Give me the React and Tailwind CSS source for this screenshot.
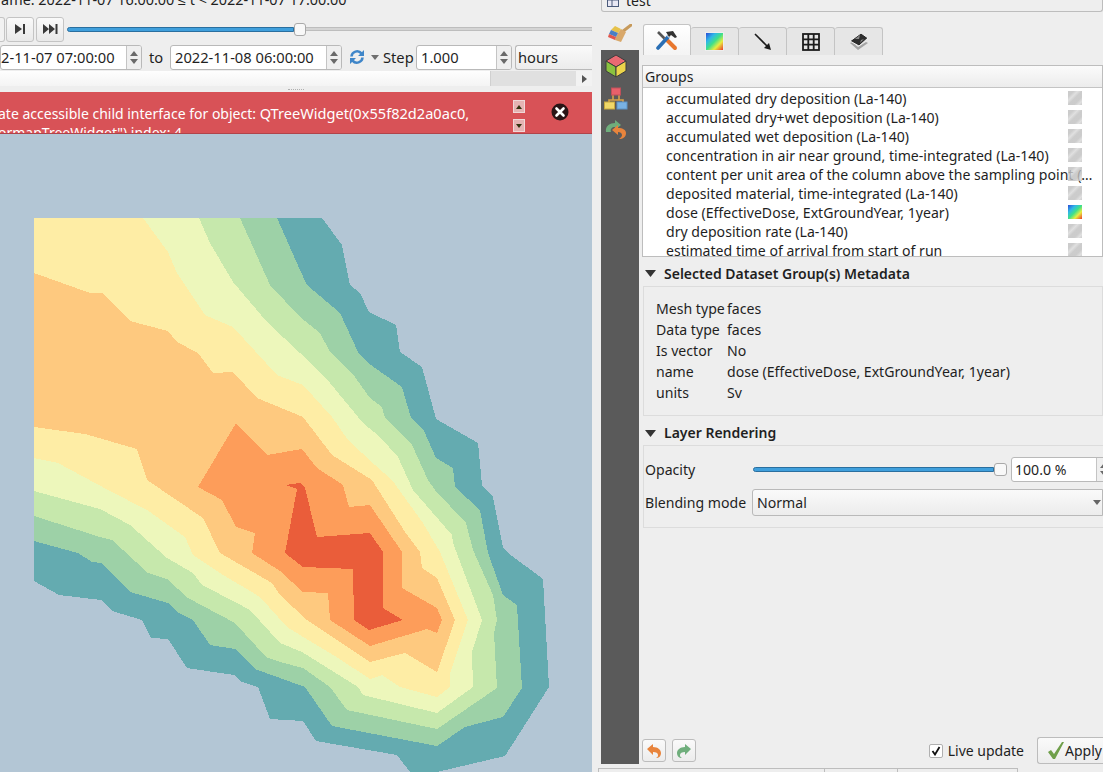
const FONT = "font-['Noto_Sans',sans-serif]";

const teal = "34,218 322,218 342,245 350,285 360,293 369,312 396,325 400,352 422,367 436,419 478,443 482,485 493,497 503,548 508,553 543,579 549,687 505,756 437,772 410,772 397,755 316,741 303,721 270,719 258,687 242,682 234,675 187,668 168,639 151,638 142,620 112,611 101,600 59,595 34,581";
const green = "34,218 277,218 300,270 307,285 340,313 358,352 368,363 402,387 411,418 424,431 436,458 453,468 455,487 480,510 488,553 503,595 517,605 522,688 503,717 465,727 437,746 332,726 305,687 280,678 255,669 235,649 210,645 193,620 177,612 168,603 130,592 102,563 92,562 78,553 34,541";
const lime = "34,218 240,218 270,285 300,317 320,333 330,352 352,373 370,398 382,407 385,418 412,445 428,480 435,490 466,523 473,550 493,595 497,620 494,633 497,688 437,729 347,710 330,687 303,668 280,662 266,657 235,623 188,598 167,579 148,573 123,550 112,540 100,537 34,516";
const pale = "34,218 199,218 210,243 233,282 267,322 300,353 330,383 363,423 380,437 398,457 413,490 452,535 453,543 482,620 472,652 473,687 437,713 363,695 358,687 302,652 280,643 250,610 237,603 202,585 193,573 167,558 130,525 100,509 34,491";
const yellow = "34,218 143,218 168,252 177,273 205,315 233,327 277,375 303,385 332,417 348,440 375,465 392,480 423,523 440,552 468,620 450,673 450,687 437,697 400,687 382,675 370,679 338,658 300,635 287,627 260,597 220,573 193,555 185,537 147,510 108,490 58,463 34,458";
const peach = "34,273 90,293 102,293 130,321 168,331 177,342 198,353 213,373 233,372 257,398 303,417 332,455 372,480 405,532 420,552 422,568 437,578 455,620 437,672 405,653 370,662 307,620 280,595 272,583 220,553 203,518 147,480 137,449 85,434 34,427";
const orange = "236,423 267,455 302,449 317,468 343,485 349,507 370,505 402,552 402,588 437,608 442,620 437,633 427,629 370,646 330,620 328,593 303,592 280,571 252,553 255,533 236,527 222,500 198,487";
const red = "285,485 300,483 305,488 317,537 370,533 383,552 383,608 403,620 369,630 354,620 353,569 303,567 285,553 297,489";

function MapArea() {
  return (
    <div className="flex-1 min-h-0 bg-[#b3c6d5]">
      <svg viewBox="0 134 592 638" className="block w-full h-full" shapeRendering="crispEdges">
        <polygon points={teal} fill="#64abb0" />
        <polygon points={green} fill="#9dd1a7" />
        <polygon points={lime} fill="#c6e8ac" />
        <polygon points={pale} fill="#edf7bb" />
        <polygon points={yellow} fill="#feeda5" />
        <polygon points={peach} fill="#fec97f" />
        <polygon points={orange} fill="#fd9d5a" />
        <polygon points={red} fill="#ea5d3a" />
      </svg>
    </div>
  );
}

function Spinner({ w = "w-[15px]" }) {
  return (
    <div className={`${w} h-full shrink-0 border-l border-[#c4c4c4] bg-[#efefef] flex flex-col items-center justify-center gap-[3px]`}>
      <svg width="8" height="5" viewBox="0 0 8 5"><path d="M0 5 4 0l4 5z" fill="#6a6a6a" /></svg>
      <svg width="8" height="5" viewBox="0 0 8 5"><path d="M0 0h8L4 5z" fill="#6a6a6a" /></svg>
    </div>
  );
}

function SpinBox({ className, text, textClass = "pl-[4px]" }) {
  return (
    <div className={`h-[25px] flex items-center bg-white border border-[#b9b9b9] rounded-[3px] overflow-hidden shrink-0 ${className}`}>
      <span className={`flex-1 whitespace-nowrap overflow-hidden ${textClass}`}>{text}</span>
      <Spinner />
    </div>
  );
}

function MediaButton({ children, className = "w-[28px]" }) {
  return (
    <div className={`h-[25px] ${className} shrink-0 flex items-center justify-center rounded-[3px] border border-[#c4c4c4] bg-gradient-to-b from-[#fafafa] to-[#e9e9e9]`}>
      {children}
    </div>
  );
}

function LeftColumn() {
  return (
    <div className="w-[592px] shrink-0 h-full flex flex-col overflow-hidden">
      <div className="h-[15px] shrink-0 overflow-hidden">
        <div className="-mt-[10px] -ml-[12px] whitespace-nowrap leading-[20px] text-[14.4px]">Frame: 2022-11-07 16:00:00 ≤ t &lt; 2022-11-07 17:00:00</div>
      </div>
      <div className="h-[28px] shrink-0 flex items-center pl-[6px] relative">
        <div className="w-[5px] -ml-[6px] mr-[1px] h-[25px] border border-l-0 border-[#c4c4c4] rounded-r-[3px] bg-[#f2f2f2]" />
        <MediaButton>
          <svg width="12" height="12" viewBox="0 0 12 12"><path d="M1 1l7 5-7 5z" fill="#3a3a3a" /><rect x="9" y="1" width="2" height="10" fill="#3a3a3a" /></svg>
        </MediaButton>
        <div className="w-[2px]" />
        <MediaButton>
          <svg width="17" height="12" viewBox="0 0 17 12"><path d="M1 1l6 5-6 5zM7 1l6 5-6 5z" fill="#3a3a3a" /><rect x="13.5" y="1" width="2" height="10" fill="#3a3a3a" /></svg>
        </MediaButton>
        <div className="flex-1 flex items-center ml-[3px] relative h-[14px]">
          <div className="w-[227px] h-[5px] rounded-l-[3px] bg-[#3f9fdc] border border-[#2a6f9f]" />
          <div className="w-[12px] h-[13px] rounded-[3px] bg-[#f8f8f8] border border-[#a9a9a9] shrink-0" />
          <div className="flex-1 h-[4px] bg-[#d4d4d4] border-y border-[#bdbdbd]" />
        </div>
      </div>
      <div className="h-[28px] shrink-0 flex items-center overflow-hidden pt-[1px] pb-[1px] text-[14.7px]">
        <SpinBox className="w-[142px]" text="2-11-07 07:00:00" textClass="pl-0" />
        <span className="w-[28px] text-center shrink-0">to</span>
        <SpinBox className="w-[172px]" text="2022-11-08 06:00:00" />
        <div className="w-[34px] shrink-0 flex items-center pl-[7px] gap-[4px]">
          <svg width="16" height="16" viewBox="0 0 16 16" className="shrink-0" fill="none" stroke="#3f86c9" strokeWidth="2.6">
            <path d="M2.5 7.5A5.6 5.6 0 0 1 12.4 4.4" />
            <path d="M13.5 8.5A5.6 5.6 0 0 1 3.6 11.6" />
            <path d="M15 1v6h-6zM1 15V9h6z" fill="#3f86c9" stroke="none" />
          </svg>
        </div>
        <svg width="8" height="5" viewBox="0 0 8 5" className="shrink-0 -ml-[5px] mr-[4px]"><path d="M0 0h8L4 5z" fill="#6e6e6e" /></svg>
        <span className="shrink-0 w-[33px] whitespace-nowrap">Step</span>
        <SpinBox className="w-[96px]" text="1.000" />
        <div className="h-[25px] flex-1 ml-[3px] border border-r-0 border-[#b9b9b9] rounded-l-[3px] bg-gradient-to-b from-[#fafafa] to-[#ececec] flex items-center pl-[2px] whitespace-nowrap">hours</div>
      </div>
      <div className="h-[15px] shrink-0 flex bg-gradient-to-b from-[#fefefe] to-[#f4f4f4]">
        <div className="w-[490px] shrink-0" />
        <div className="flex-1 bg-[#e0e0e0] border-l border-[#d0d0d0]" />
        <div className="w-[16px] flex items-center justify-center bg-[#f2f2f2]">
          <svg width="5" height="8" viewBox="0 0 5 8"><path d="M0 0l5 4-5 4z" fill="#555" /></svg>
        </div>
      </div>
      <div className="h-[6px] shrink-0 flex items-center justify-center">
        <div className="w-[16px] border-t border-dotted border-[#b0b0b0]" />
      </div>
      <div className="h-[42px] shrink-0 bg-[#d85257] text-white flex overflow-hidden border-b border-[#b0444a]">
        <div className="flex-1 min-w-0 leading-[19px] pt-[12px] whitespace-nowrap overflow-hidden">
          <div className="-ml-[2px]">ate accessible child interface for object: <span className="text-[14.6px]">QTreeWidget(0x55f82d2a0ac0,</span></div>
          <div className="-ml-[2px]">ormapTreeWidget") index: 4</div>
        </div>
        <div className="w-[13px] shrink-0 flex flex-col gap-[6px] pt-[8px] mr-[25px]">
          <div className="w-[12px] h-[13px] bg-[#e5b3b3] border border-[#f0d8d8] flex items-center justify-center"><svg width="6" height="4" viewBox="0 0 6 4"><path d="M0 4l3-4 3 4z" fill="#331" /></svg></div>
          <div className="w-[12px] h-[13px] bg-[#e5b3b3] border border-[#f0d8d8] flex items-center justify-center"><svg width="6" height="4" viewBox="0 0 6 4"><path d="M0 0h6L3 4z" fill="#331" /></svg></div>
        </div>
        <div className="w-[41px] shrink-0 pt-[11px]">
          <svg width="18" height="18" viewBox="0 0 18 18"><circle cx="9" cy="9" r="8.5" fill="#2a1416" /><path d="M5.5 5.5l7 7M12.5 5.5l-7 7" stroke="#fff" strokeWidth="2.6" strokeLinecap="round" /></svg>
        </div>
      </div>
      <MapArea />
    </div>
  );
}

const groups = [
  ["accumulated dry deposition (La-140)"],
  ["accumulated dry+wet deposition (La-140)"],
  ["accumulated wet deposition (La-140)"],
  ["concentration in air near ground, time-integrated (La-140)"],
  ["content per unit area of the column above the sampling point (…"],
  ["deposited material, time-integrated (La-140)"],
  ["dose (EffectiveDose, ExtGroundYear, 1year)", true],
  ["dry deposition rate (La-140)"],
  ["estimated time of arrival from start of run"],
];

function Swatch({ on }) {
  return on ? (
    <div className="absolute right-[20px] top-[2px] w-[14px] h-[14px] bg-[linear-gradient(135deg,#2b4bd8_0%,#2fb8e8_28%,#3fe08a_50%,#e8ee40_72%,#ec3a2a_100%)]" />
  ) : (
    <div className="absolute right-[20px] top-[2px] w-[14px] h-[14px] bg-[repeating-linear-gradient(135deg,#bfbfbf_0px,#bfbfbf_4px,#d8d8d8_7px,#bfbfbf_10px)] opacity-80" />
  );
}

function Tab({ active, children }) {
  return active ? (
    <div className="w-[48px] h-[31px] shrink-0 rounded-t-[3px] border border-b-0 border-[#c4c4c4] bg-gradient-to-b from-[#ffffff] to-[#f4f4f4] flex items-center justify-center pb-[1px]">{children}</div>
  ) : (
    <div className="w-[48px] h-[28px] shrink-0 rounded-t-[3px] border border-l-0 border-b-0 border-[#c4c4c4] bg-[#e6e6e6] flex items-center justify-center">{children}</div>
  );
}

function Triangle() {
  return <svg width="11" height="7" viewBox="0 0 11 7" className="shrink-0"><path d="M0 0h11L5.5 7z" fill="#333" /></svg>;
}

function MetaRow({ k, v }) {
  return (
    <div className="flex h-[21px] items-center whitespace-nowrap">
      <span className="w-[71px] shrink-0">{k}</span>
      <span>{v}</span>
    </div>
  );
}

function SidebarColumn() {
  return (
    <div className="w-[38px] shrink-0 flex flex-col">
      <div className="h-[50px] shrink-0 flex items-end justify-center pb-[6px] pr-[1px]">
        <svg width="24" height="20" viewBox="0 0 24 20">
          <path d="M23 1L14 8" stroke="#c79a5b" strokeWidth="3" strokeLinecap="round" />
          <path d="M13 5l5 3-5 10-6-2 1-3 2-4z" fill="#d9a86a" />
          <path d="M7 2l6 3-3 4-7-3z" fill="#e6c24a" />
          <path d="M3 6l7 3-2 4-7-3z" fill="#4a7fc4" />
          <path d="M1 10l7 3-1 3-7-3z" fill="#e2574c" />
        </svg>
      </div>
      <div className="flex-1 bg-[#5a5a5a] flex flex-col items-center pr-[8px]">
        <svg width="22" height="24" viewBox="0 0 22 24" className="mt-[4px]">
          <path d="M11 1l10 6-10 6L1 7z" fill="#ea6a72" stroke="#3d3d3d" strokeWidth="1" />
          <path d="M1 7l10 6v10L1 17z" fill="#8ac23f" stroke="#3d3d3d" strokeWidth="1" />
          <path d="M21 7l-10 6v10l10-6z" fill="#ecd44a" stroke="#3d3d3d" strokeWidth="1" />
        </svg>
        <svg width="24" height="23" viewBox="0 0 24 23" className="mt-[9px]">
          <path d="M9 8v5h6V8M5 15v-2h14v2M9 13v-1M15 13v-1" stroke="#d8a24a" strokeWidth="1.6" fill="none" />
          <rect x="7.5" y="1" width="9" height="7" fill="#e8606a" stroke="#c0505a" />
          <rect x="0.5" y="15" width="10" height="7" fill="#f0d868" stroke="#c8a83c" />
          <rect x="13" y="15" width="10" height="7" fill="#79b2e2" stroke="#5f94c4" />
        </svg>
        <svg width="22" height="21" viewBox="0 0 22 21" className="mt-[9px]">
          <path d="M1 13C0 7 5 4 10 4V1l6 5-6 5V8C7 8 5 10 6 13z" fill="#6fae7c" />
          <path d="M21 14c0 4-3 6-7 6 2-1 3-3 3-4 0-2-2-3-4-3v3l-6-5 6-5v3c5 0 8 2 8 5z" fill="#e8843c" />
        </svg>
      </div>
    </div>
  );
}

function RightPanel() {
  return (
    <div className="w-[461px] shrink-0 ml-[3px] flex flex-col overflow-hidden text-[14.1px]">
      <div className="h-[24px] shrink-0" />
      <div className="flex pl-[1px] items-end h-[31px] shrink-0">
        <Tab active>
          <svg width="22" height="22" viewBox="0 0 22 22">
            <path d="M2 3L11 12" stroke="#555" strokeWidth="2.6" />
            <path d="M10 10L19 19" stroke="#e8772e" strokeWidth="4" strokeLinecap="round" />
            <path d="M2 19L12 8" stroke="#2a6fb5" strokeWidth="3.6" strokeLinecap="round" />
            <path d="M12 8L14 6" stroke="#e8e8e8" strokeWidth="3" />
            <path d="M10 3l7-1 4 6-2 1-4-3-2 2z" fill="#333" />
          </svg>
        </Tab>
        <Tab><div className="w-[19px] h-[19px] bg-[linear-gradient(135deg,#2b4bd8_0%,#2fb8e8_28%,#3fe08a_50%,#e8ee40_72%,#ec3a2a_100%)] border border-[#eeeeee]" /></Tab>
        <Tab>
          <svg width="18" height="18" viewBox="0 0 18 18"><path d="M1 1L13 13" stroke="#1c1c1c" strokeWidth="1.6" /><path d="M17 17l-7-2 5-5z" fill="#1c1c1c" /></svg>
        </Tab>
        <Tab>
          <svg width="18" height="18" viewBox="0 0 18 18" fill="none" stroke="#1c1c1c" strokeWidth="1.8"><rect x="1" y="1" width="16" height="16" /><path d="M6.3 1v16M11.7 1v16M1 6.3h16M1 11.7h16" /></svg>
        </Tab>
        <Tab>
          <svg width="20" height="19" viewBox="0 0 20 19">
            <path d="M1 11l8 7 10-7-2-1-8 5-6-5z" fill="#a4a4a4" />
            <path d="M12 1l7 5-9 8-9-5z" fill="#2e2e2e" stroke="#f4f4f4" strokeWidth="1" />
            <path d="M11 3l-1 4-4 0z" fill="#8a8a8a" />
            <path d="M12 8l3-1-4 4z" fill="#8a8a8a" />
          </svg>
        </Tab>
      </div>
      <div className="h-[10px] shrink-0" />
      <div className="h-[192px] shrink-0 border border-[#bdbdbd] bg-white overflow-hidden">
        <div className="h-[22px] pl-[2px] flex items-center border-b border-[#c4c4c4] bg-gradient-to-b from-[#fbfbfb] to-[#ececec]">Groups</div>
        <div className="pt-[1px]">
          {groups.map(([label, on]) => (
            <div key={label} className="relative h-[19px] pl-[23px] leading-[19px] whitespace-nowrap">
              {label}
              <Swatch on={on} />
            </div>
          ))}
        </div>
      </div>
      <div className="h-[29px] shrink-0 flex items-center pl-[3px] gap-[8px] font-semibold pt-[4px] text-[14px]">
        <Triangle />
        <span className="whitespace-nowrap">Selected Dataset Group(s) Metadata</span>
      </div>
      <div className="h-[130px] shrink-0 ml-[1px] border border-[#dcdcdc] pl-[12px] pt-[11px]">
        <MetaRow k="Mesh type" v="faces" />
        <MetaRow k="Data type" v="faces" />
        <MetaRow k="Is vector" v="No" />
        <MetaRow k="name" v="dose (EffectiveDose, ExtGroundYear, 1year)" />
        <MetaRow k="units" v="Sv" />
      </div>
      <div className="h-[29px] shrink-0 flex items-center pl-[3px] gap-[8px] font-semibold pt-[5px] text-[14px]">
        <Triangle />
        <span className="whitespace-nowrap">Layer Rendering</span>
      </div>
      <div className="h-[83px] shrink-0 ml-[1px] border border-[#dcdcdc] border-r-0 pl-[1px] pt-[11px] overflow-hidden">
        <div className="flex items-center h-[25px]">
          <span className="w-[108px] shrink-0">Opacity</span>
          <div className="w-[254px] shrink-0 flex items-center">
            <div className="flex-1 h-[5px] rounded-l-[3px] bg-[#3f9fdc] border border-[#2a6f9f]" />
            <div className="w-[13px] h-[13px] rounded-[3px] bg-[#f8f8f8] border border-[#a9a9a9] shrink-0" />
          </div>
          <div className="w-[4px] shrink-0" />
          <div className="w-[100px] shrink-0 h-[25px] flex items-center bg-white border border-[#b9b9b9] rounded-l-[3px] pl-[3px] whitespace-nowrap">
            <span className="w-[81px] shrink-0">100.0 %</span>
            <Spinner />
          </div>
        </div>
        <div className="flex items-center h-[27px] mt-[7px]">
          <span className="w-[107px] shrink-0 whitespace-nowrap">Blending mode</span>
          <div className="flex-1 h-[27px] border border-[#b9b9b9] rounded-l-[3px] bg-gradient-to-b from-[#fafafa] to-[#ececec] flex items-center justify-between pl-[4px] pr-[1px]">
            <span>Normal</span>
            <svg width="8" height="5" viewBox="0 0 8 5"><path d="M0 0h8L4 5z" fill="#666" /></svg>
          </div>
        </div>
      </div>
      <div className="flex-1 min-h-0 flex items-end pb-[2px]">
        <div className="w-[24px] h-[23px] rounded-[3px] border border-[#bcbcbc] bg-gradient-to-b from-[#fafafa] to-[#ececec] flex items-center justify-center">
          <svg width="14" height="14" viewBox="0 0 14 14"><path d="M0 5l6-5v3c5 0 8 3 8 6 0 3-2 5-5 5 2-1 2-2 2-3 0-2-2-3-5-3v3z" fill="#e8843c" /></svg>
        </div>
        <div className="w-[24px] h-[23px] ml-[6px] rounded-[3px] border border-[#bcbcbc] bg-gradient-to-b from-[#fafafa] to-[#ececec] flex items-center justify-center">
          <svg width="14" height="14" viewBox="0 0 14 14"><path d="M14 5L8 0v3C3 3 0 6 0 9c0 3 2 5 5 5-2-1-2-2-2-3 0-2 2-3 5-3v3z" fill="#6fae7c" /></svg>
        </div>
        <div className="flex-1" />
        <div className="flex items-center h-[23px] mr-[13px] text-[14px]">
          <div className="w-[14px] h-[14px] bg-white border border-[#b0b0b0] rounded-[2px] flex items-center justify-center mr-[5px]">
            <svg width="10" height="10" viewBox="0 0 10 10"><path d="M1.5 5l2.5 3.5L8.5 1" fill="none" stroke="#111" strokeWidth="1.8" /></svg>
          </div>
          <span className="whitespace-nowrap">Live update</span>
        </div>
        <div className="w-[66px] h-[27px] shrink-0 -mb-[2px] border border-r-0 border-[#bcbcbc] rounded-l-[3px] bg-gradient-to-b from-[#fafafa] to-[#ececec] flex items-center pl-[10px] gap-[1px] whitespace-nowrap text-[14px]">
          <svg width="16" height="17" viewBox="0 0 16 17" className="shrink-0"><path d="M0 10l3-2 3 4L14 0h2L7 17H5z" fill="#6f9f4a" /></svg>
          <span>Apply</span>
        </div>
      </div>
    </div>
  );
}

export default function App() {
  return (
    <div className={`w-[1103px] h-[772px] overflow-hidden bg-[#eeeeee] text-[#1f1f1f] text-[14px] leading-[20px] flex ${FONT}`}>
      <LeftColumn />
      <div className="w-[6px] shrink-0" />
      <div className="flex-1 min-w-0 flex flex-col h-full">
        <div className="h-[12px] shrink-0 -mb-[12px] z-10 flex">
          <div className="w-[511px] h-[12px] ml-[3px] border border-t-0 border-[#bdbdbd] rounded-b-[3px] bg-[#eeeeee] flex items-end pl-[5px] overflow-hidden">
            <div className="flex items-center gap-[7px] leading-[14px] mb-[3px] whitespace-nowrap">
              <svg width="12" height="12" viewBox="0 0 12 12" fill="#e8e8f4" stroke="#4a5a7a"><rect x="0.5" y="0.5" width="11" height="11" /><path d="M0.5 5h11M5 0.5v11" /></svg>
              <span>test</span>
            </div>
          </div>
        </div>
        <div className="flex-1 min-h-0 flex pl-[3px] pb-[4px]">
          <SidebarColumn />
          <RightPanel />
        </div>
        <div className="h-[4px] shrink-0 flex">
          <div className="w-[226px] border-t border-l border-[#bdbdbd]" />
          <div className="w-[73px] border-t border-l border-[#bdbdbd]" />
          <div className="w-[121px] border-t border-x border-[#bdbdbd]" />
        </div>
      </div>
    </div>
  );
}
